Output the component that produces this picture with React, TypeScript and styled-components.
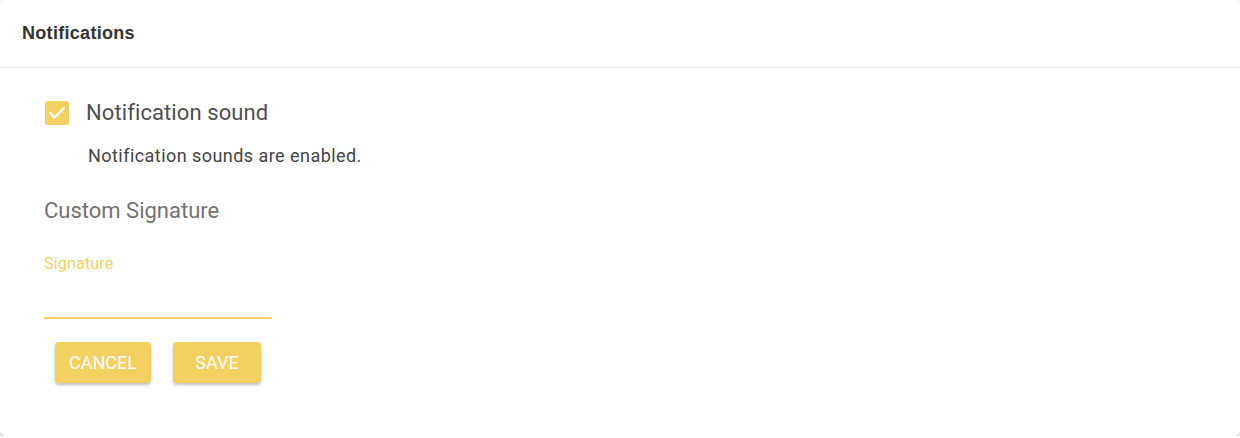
import styled, { createGlobalStyle } from "styled-components";

const GlobalStyle = createGlobalStyle`
  html, body {
    margin: 0;
    padding: 0;
    background: #ffffff;
  }
  body {
    font-family: Roboto, "Liberation Sans", Arial, sans-serif;
  }
`;

const accent = "#f3d161";

const Card = styled.section`
  width: 1240px;
  height: 436px;
  background: #fff;
  border-radius: 5px;
  box-shadow: 0 1px 2px rgba(0, 0, 0, 0.35);
  box-sizing: border-box;
  overflow: hidden;
`;

const CardHeader = styled.header`
  height: 68px;
  padding: 0 22px;
  display: flex;
  align-items: center;
  border-bottom: 1px solid #ececec;
  box-sizing: border-box;
`;

const Title = styled.h2`
  margin: 0;
  font-family: "Liberation Sans", Arial, sans-serif;
  font-size: 18px;
  font-weight: 700;
  letter-spacing: 0.3px;
  color: #333;
`;

const CardBody = styled.div`
  padding: 32px 44px 0;
  display: flex;
  flex-direction: column;
`;

const CheckRow = styled.label`
  display: flex;
  align-items: center;
  gap: 17px;
  margin-left: 1px;
  height: 26px;
  cursor: pointer;
`;

const CheckBox = styled.span<{ checked: boolean }>`
  width: 24px;
  height: 24px;
  border-radius: 3px;
  background: ${(p) => (p.checked ? accent : "transparent")};
  border: ${(p) => (p.checked ? "none" : "2px solid #888")};
  display: flex;
  align-items: center;
  justify-content: center;
`;

const CheckLabel = styled.span`
  font-size: 22px;
  line-height: 26px;
  letter-spacing: 0.1px;
  color: #4f4f4f;
`;

const Helper = styled.p`
  margin: 19px 0 0 44px;
  font-size: 18px;
  line-height: 22px;
  letter-spacing: 0.45px;
  color: #444;
`;

const SectionTitle = styled.h3`
  margin: 31px 0 0;
  font-size: 22px;
  line-height: 26px;
  font-weight: 400;
  color: #727272;
`;

const Field = styled.div`
  margin-top: 30px;
  width: 228px;
  display: flex;
  flex-direction: column;
`;

const FieldLabel = styled.label`
  font-size: 16px;
  line-height: 19px;
  letter-spacing: 0.2px;
  color: ${accent};
`;

const FieldInput = styled.input`
  box-sizing: border-box;
  height: 46px;
  border: none;
  border-bottom: 2px solid ${accent};
  outline: none;
  font-size: 16px;
  font-family: inherit;
  padding: 0;
  background: transparent;
`;

const Actions = styled.div`
  display: flex;
  gap: 22px;
  margin: 23px 0 0 11px;
`;

const Button = styled.button`
  height: 41px;
  padding: 0 14px;
  min-width: 88px;
  border: none;
  border-radius: 4px;
  background: ${accent};
  color: #fff;
  font-family: Roboto, "Liberation Sans", Arial, sans-serif;
  font-size: 18px;
  font-weight: 400;
  text-transform: uppercase;
  box-shadow: 0 2px 3px rgba(0, 0, 0, 0.25);
  cursor: pointer;
`;

function CheckIcon() {
  return (
    <svg width="20" height="20" viewBox="0 0 24 24" fill="none">
      <path
        d="M4 12.5l5 5L20 6.5"
        stroke="#fff"
        strokeWidth="3"
        strokeLinecap="round"
        strokeLinejoin="round"
      />
    </svg>
  );
}

export default function App() {
  const soundOn = true;

  return (
    <>
      <GlobalStyle />
      <Card>
        <CardHeader>
          <Title>Notifications</Title>
        </CardHeader>
        <CardBody>
          <CheckRow>
            <CheckBox checked={soundOn}>{soundOn && <CheckIcon />}</CheckBox>
            <CheckLabel>Notification sound</CheckLabel>
          </CheckRow>
          <Helper>Notification sounds are enabled.</Helper>
          <SectionTitle>Custom Signature</SectionTitle>
          <Field>
            <FieldLabel>Signature</FieldLabel>
            <FieldInput />
          </Field>
          <Actions>
            <Button>Cancel</Button>
            <Button>Save</Button>
          </Actions>
        </CardBody>
      </Card>
    </>
  );
}
